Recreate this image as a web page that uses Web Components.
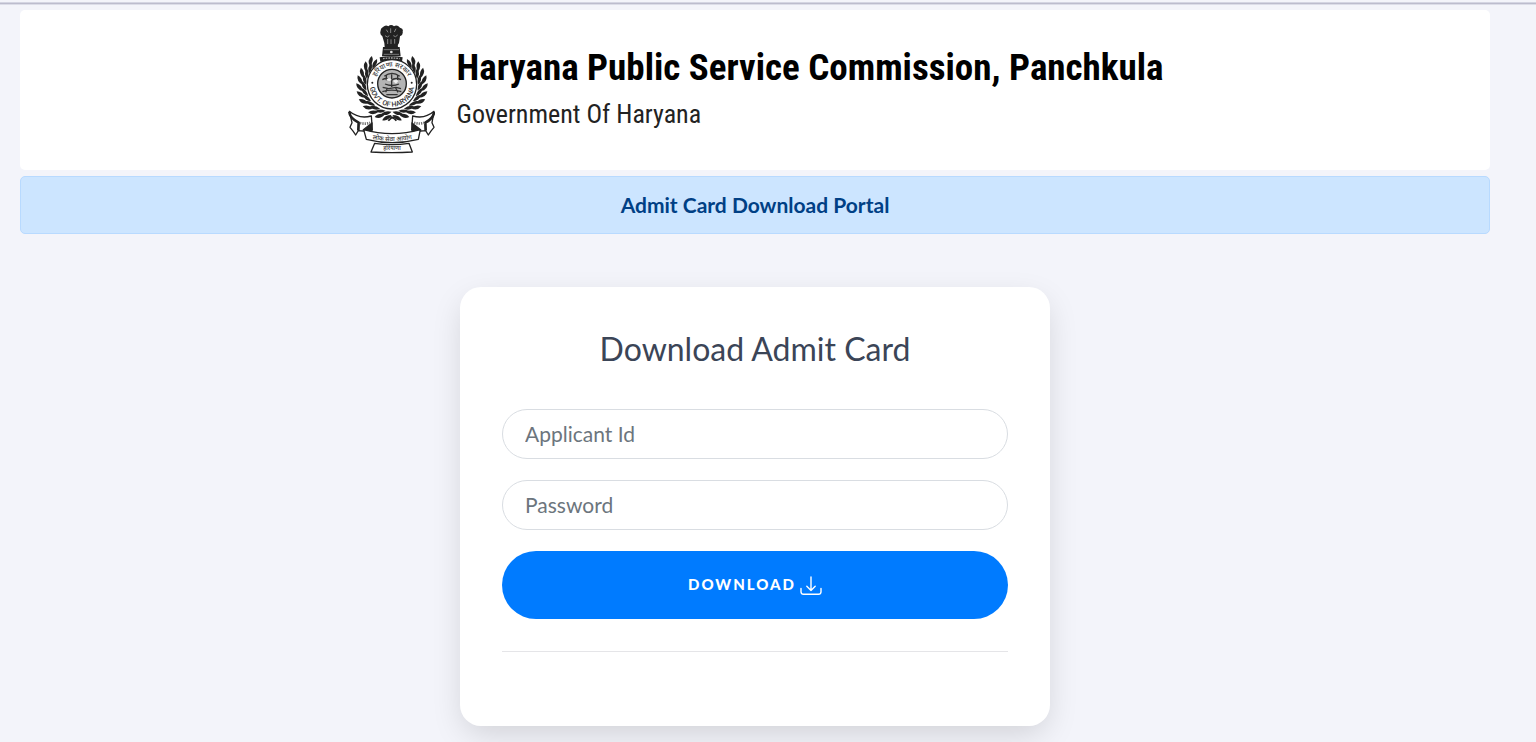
<!DOCTYPE html>
<html lang="en">
<head>
<meta charset="utf-8">
<meta name="viewport" content="width=device-width, initial-scale=1">
<title>Admit Card Download Portal</title>
<style>
  body {
    margin: 0;
    background: #f3f4fa;
    color: #3b4557;
    font-family: Lato, "Liberation Sans", sans-serif;
    font-size: 21px;
  }
</style>
</head>
<body>
<admit-page>
  <site-header slot="header" name="Haryana Public Service Commission, Panchkula" subtitle="Government Of Haryana"></site-header>
  <portal-banner slot="header">Admit Card Download Portal</portal-banner>
  <login-card>
    <span slot="title">Download Admit Card</span>
    <pill-input label="Applicant Id" type="text"></pill-input>
    <pill-input label="Password" type="password"></pill-input>
    <download-button>Download</download-button>
  </login-card>
</admit-page>

<script>
// Page frame: top rule, header stack, then the centred content
class AdmitPage extends HTMLElement {
  constructor() {
    super();
    this.attachShadow({ mode: 'open' });
    this.shadowRoot.innerHTML = `
      <style>
        :host {
          display: block;
          border-top: 2px solid #f3f4fa;
        }
        .rule {
          height: 1px;
          background: #bcbccd;
          border-top: 1px solid #d4d5e2;
          border-bottom: 1px solid #dcdde8;
        }
        .page {
          padding: 5px 46px 16px 20px;
        }
        header {
          display: flex;
          flex-direction: column;
          gap: 6px;
        }
        main {
          display: flex;
          justify-content: center;
          padding-top: 53px;
        }
      </style>
      <div class="rule"></div>
      <div class="page">
        <header><slot name="header"></slot></header>
        <main><slot></slot></main>
      </div>
    `;
  }
}

// State emblem
class StateEmblem extends HTMLElement {
  constructor() {
    super();
    this.attachShadow({ mode: 'open' });
  }

  connectedCallback() {
    this.render();
  }

  // Leaves run up both sides of the seal, in two rows
  leaves() {
    let out = '';
    for (let i = 0; i < 11; i++) {
      const angle = 80 - i * 13;
      for (const side of [1, -1]) {
        out += `<g transform="translate(165 212) scale(${side} 1) rotate(${angle})">
          <path d="M77 12 Q76 -9 90 -17 Q94 2 77 12Z"/>
          <path d="M87 14 Q91 -7 107 -11 Q108 8 87 14Z"/>
        </g>`;
      }
    }
    return out;
  }

  render() {
    this.shadowRoot.innerHTML = `
      <style>
        :host { display: block; flex: none; width: 88px; }
        svg { display: block; width: 100%; }
        text { font-family: Roboto, "Noto Sans", sans-serif; font-weight: 500; fill: #333; }
      </style>
      <svg viewBox="30 30 264 390" role="img" aria-label="Emblem of Haryana" fill="#222">
        <g>
          <path d="M138 36 Q146 28 154 34 Q162 26 171 34 Q180 28 189 38 Q200 40 197 50 Q199 60 189 64 L186 84 Q181 90 183 96 H143 L142 84 L136 64 Q127 58 131 47 Q130 40 138 36Z"/>
          <path d="M138 96 H188 L191 124 H135Z"/>
          <path d="M148 44 l5 8 m8 -12 v14 m16 -13 l-5 10 M144 62 q8 8 13 0 m12 0 q7 7 13 -2 M152 72 v15 m10 -14 v14 m11 -15 v14" stroke="#888" stroke-width="3" fill="none"/>
          <path d="M140 104 h46 M140 118 h46" stroke="#777" stroke-width="3"/>
          <circle cx="163" cy="111" r="4" fill="#ddd"/>
          <path d="M128 127 Q163 120 197 127 L195 140 Q163 132 130 140Z"/>
          <path d="M138 131 Q163 127 188 131" stroke="#aaa" stroke-width="4" stroke-dasharray="5 3" fill="none"/>
        </g>
        <g>${this.leaves()}</g>
        <circle cx="165" cy="208" r="74" fill="#fff" stroke="#222" stroke-width="4"/>
        <circle cx="165" cy="206" r="43" fill="#b4b4b4" stroke="#222" stroke-width="4"/>
        <path id="upper" d="M112 208 A53 53 0 0 1 218 208" fill="none"/>
        <path id="lower" d="M98 208 A67 67 0 0 0 232 208" fill="none"/>
        <text font-size="20"><textPath href="#upper" startOffset="50%" text-anchor="middle">हरियाणा सरकार</textPath></text>
        <text font-size="21"><textPath href="#lower" startOffset="50%" text-anchor="middle">GOVT. OF HARYANA</textPath></text>
        <circle cx="106" cy="203" r="3"/>
        <circle cx="224" cy="203" r="3"/>
        <g fill="none" stroke="#333" stroke-width="4">
          <path d="M142 184 q23 -18 46 0 M136 194 q14 -8 26 2 q14 -10 30 -2"/>
          <path d="M148 180 v16 M182 180 v16 M164 178 v38" />
          <path d="M144 207 q22 9 42 0 M137 217 l18 4 22 -4 15 4 M136 230 q28 -9 57 0 M148 239 h34"/>
          <path d="M151 220 l-5 12 M176 219 l7 13"/>
        </g>
        <path d="M148 194 q8 -10 16 0 q-4 8 -16 0 M168 198 q10 -8 16 0 l-7 8Z" fill="#eee"/>
        <path d="M148 308 Q165 300 178 317 M154 317 Q165 303 183 308" stroke="#222" stroke-width="5" fill="none"/>
        <g stroke="#222" stroke-width="4" stroke-linejoin="round">
          <path d="M37 289 Q66 313 103 303 L106 345 Q84 350 64 347 L56 360 Q49 348 39 337 L45 323Z" fill="#fff"/>
          <path d="M291 289 Q264 313 227 303 L224 345 Q246 350 266 347 L274 360 Q281 348 291 337 L285 323Z" fill="#fff"/>
          <path d="M37 291 Q38 309 65 323 L64 347 M291 291 Q290 309 265 323 L266 347" fill="none" stroke-width="8"/>
          <path d="M79 344 L105 324 L102 365Z M251 344 L225 324 L228 365Z"/>
          <path d="M80 344 Q165 368 250 344 L244 373 Q165 393 88 373Z" fill="#fff"/>
          <path d="M113 385 Q165 393 216 385 L226 411 Q165 415 102 411Z" fill="#fff"/>
        </g>
        <path d="M69 324 q16 4 31 -1 M231 323 q17 5 31 0" fill="none" stroke="#777" stroke-width="8" stroke-dasharray="4 3"/>
        <path id="motto" d="M90 369 Q165 388 242 369" fill="none"/>
        <text font-size="19"><textPath href="#motto" startOffset="50%" text-anchor="middle">लोक सेवा आयोग</textPath></text>
        <text x="165" y="406" font-size="17" text-anchor="middle">हरियाणा</text>
      </svg>
    `;
  }
}

class SiteHeader extends HTMLElement {
  constructor() {
    super();
    this.attachShadow({ mode: 'open' });
  }

  connectedCallback() {
    this.render();
  }

  render() {
    this.shadowRoot.innerHTML = `
      <style>
        :host {
          display: flex;
          justify-content: center;
          gap: 22px;
          padding: 15px 16px;
          border-radius: 5px;
          background: #fff;
          color: #000;
          font-family: "Roboto Condensed", Roboto, sans-serif;
        }
        .text { padding-top: 19px; }
        h1 {
          margin: 0;
          font-size: 37px;
          line-height: 48px;
          font-weight: 700;
        }
        p {
          margin: 0;
          color: #222;
          font-size: 26px;
          line-height: 44px;
        }
      </style>
      <state-emblem></state-emblem>
      <div class="text">
        <h1>${this.getAttribute('name')}</h1>
        <p>${this.getAttribute('subtitle')}</p>
      </div>
    `;
  }
}

class PortalBanner extends HTMLElement {
  constructor() {
    super();
    this.attachShadow({ mode: 'open' });
    this.shadowRoot.innerHTML = `
      <style>
        :host {
          display: block;
          padding: 12px 16px;
          border: 1px solid #b8daff;
          border-radius: 5px;
          background: #cce5ff;
          color: #004085;
          text-align: center;
        }
        h2 {
          margin: 0;
          font-size: 21px;
          line-height: 32px;
          font-weight: 700;
        }
      </style>
      <h2><slot></slot></h2>
    `;
  }
}

class LoginCard extends HTMLElement {
  constructor() {
    super();
    this.attachShadow({ mode: 'open' });
    this.shadowRoot.innerHTML = `
      <style>
        :host {
          display: block;
          box-sizing: border-box;
          width: 100%;
          max-width: 590px;
          padding: 42px 42px 74px;
          border-radius: 21px;
          background: #fff;
          box-shadow: 0 11px 32px -4px rgba(0, 0, 0, 0.15);
        }
        h3 {
          margin: 0 0 40px;
          font-size: 32px;
          line-height: 40px;
          font-weight: 400;
          text-align: center;
        }
        form {
          display: flex;
          flex-direction: column;
          gap: 21px;
        }
        hr {
          margin: 32px 0 0;
          border: 0;
          border-top: 1px solid #e5e5e8;
        }
      </style>
      <h3><slot name="title"></slot></h3>
      <form><slot></slot></form>
      <hr>
    `;
  }
}

class PillInput extends HTMLElement {
  constructor() {
    super();
    this.attachShadow({ mode: 'open' });
  }

  connectedCallback() {
    this.render();
  }

  render() {
    const label = this.getAttribute('label');
    this.shadowRoot.innerHTML = `
      <style>
        :host { display: block; }
        input {
          display: block;
          box-sizing: border-box;
          width: 100%;
          height: 50px;
          padding: 0 22px 2px;
          border: 1px solid #d9dde2;
          border-radius: 25px;
          background: #fff;
          color: #495057;
          font: inherit;
        }
        input::placeholder { color: #6c757d; opacity: 1; }
      </style>
      <input type="${this.getAttribute('type')}" placeholder="${label}" aria-label="${label}">
    `;
  }
}

class DownloadButton extends HTMLElement {
  constructor() {
    super();
    this.attachShadow({ mode: 'open' });
    this.shadowRoot.innerHTML = `
      <style>
        :host { display: block; }
        button {
          display: flex;
          align-items: center;
          justify-content: center;
          gap: 4px;
          width: 100%;
          height: 68px;
          padding: 0 22px 2px;
          border: 0;
          border-radius: 34px;
          background: #007bff;
          color: #fff;
          font: inherit;
          font-size: 15px;
          font-weight: 900;
          letter-spacing: 2px;
          text-transform: uppercase;
          cursor: pointer;
        }
        svg { width: 22px; height: 22px; }
      </style>
      <button type="button">
        <slot></slot>
        <svg viewBox="0 0 22 22" fill="none" stroke="#fff" stroke-width="1.4" stroke-linecap="round" stroke-linejoin="round" aria-hidden="true">
          <path d="M1 15.500v3.500a2.500 2.500 0 0 0 2.500 2.300h15a2.500 2.500 0 0 0 2.500-2.300v-3.500"/>
          <path d="M11 4v13.500M6.800 13.300l4.200 4.200 4.200-4.200"/>
        </svg>
      </button>
    `;
  }
}

customElements.define('state-emblem', StateEmblem);
customElements.define('site-header', SiteHeader);
customElements.define('portal-banner', PortalBanner);
customElements.define('pill-input', PillInput);
customElements.define('download-button', DownloadButton);
customElements.define('login-card', LoginCard);
customElements.define('admit-page', AdmitPage);
</script>
</body>
</html>
